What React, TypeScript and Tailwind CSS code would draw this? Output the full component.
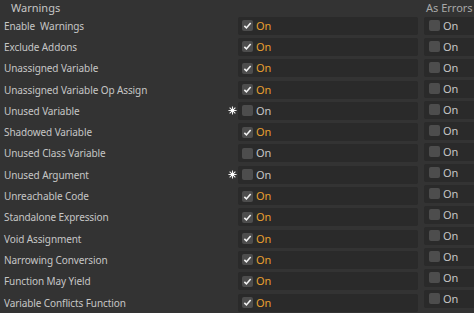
const rows: { label: string; on: boolean; changed?: boolean }[] = [
  { label: "Enable Warnings", on: true },
  { label: "Exclude Addons", on: true },
  { label: "Unassigned Variable", on: true },
  { label: "Unassigned Variable Op Assign", on: true },
  { label: "Unused Variable", on: false, changed: true },
  { label: "Shadowed Variable", on: true },
  { label: "Unused Class Variable", on: false },
  { label: "Unused Argument", on: false, changed: true },
  { label: "Unreachable Code", on: true },
  { label: "Standalone Expression", on: true },
  { label: "Void Assignment", on: true },
  { label: "Narrowing Conversion", on: true },
  { label: "Function May Yield", on: true },
  { label: "Variable Conflicts Function", on: true },
];

function Check({ checked }: { checked: boolean }) {
  return (
    <div className="w-[11px] h-[11px] rounded-[2px] bg-[#4d4d4d] flex items-center justify-center">
      {checked && (
        <svg width="9" height="9" viewBox="0 0 10 10">
          <path d="M1.5 5.5l2.3 2.2L8.5 2.3" fill="none" stroke="#f2f2f2" strokeWidth={1.8} />
        </svg>
      )}
    </div>
  );
}

function Star() {
  return (
    <svg width="9" height="9" viewBox="0 0 10 10">
      <path d="M5 0.5v9M0.5 5h9M1.8 1.8l6.4 6.4M8.2 1.8l-6.4 6.4" stroke="#f0f0f0" strokeWidth={1.2} />
      <circle cx="5" cy="5" r="2" fill="#ffffff" />
    </svg>
  );
}

export default function App() {
  return (
    <div className="w-[474px] h-[313px] overflow-hidden bg-[#333333] text-[#c6c6c6] text-[11px] leading-none" style={{ fontFamily: '"Noto Sans", sans-serif' }}>
      <div className="flex h-[15px] items-center">
        <div className="pl-[11px] w-[424px]">Warnings</div>
        <div className="pl-[2px] text-[#a8a8a8]">As Errors</div>
      </div>
      <div className="flex">
        <div className="w-[424px]">
          {rows.map((r) => (
            <div key={r.label} className="flex items-center h-[21.3px]">
              <div className="w-[226px] pl-[4px] text-[10px] leading-[14px] tracking-[-0.1px] whitespace-nowrap">
                {r.label === "Enable Warnings" ? <>Enable&nbsp;&nbsp;Warnings</> : r.label}
              </div>
              <div className="w-[12px] flex justify-center">{r.changed && <Star />}</div>
              <div className="w-[180px] h-[18px] bg-[#2a2a2a] rounded-[2px] flex items-center pl-[4px] gap-[3px]">
                <Check checked={r.on} />
                <span className={r.on ? "text-[#e7a030] leading-[14px]" : "text-[#c6c6c6] leading-[14px]"}>On</span>
              </div>
            </div>
          ))}
        </div>
        <div className="flex-1">
          {rows.map((r) => (
            <div key={r.label} className="flex items-center h-[21px]">
              <div className="w-full h-[18px] bg-[#2a2a2a] rounded-l-[2px] flex items-center pl-[5px] gap-[3px]">
                <Check checked={false} />
                <span className="leading-[14px]">On</span>
              </div>
            </div>
          ))}
        </div>
      </div>
    </div>
  );
}
